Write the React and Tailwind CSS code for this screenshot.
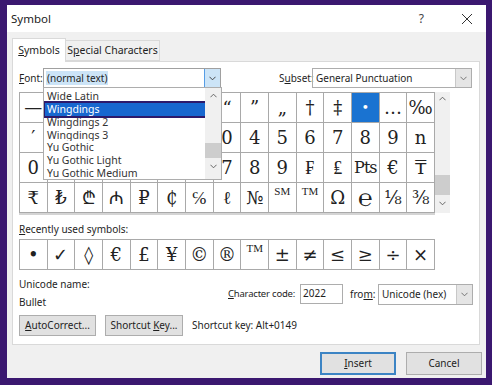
import React from 'react';

const gridRows = [
  ['—', '―', '‗', '‘', '’', '‚', '‛', '“', '”', '„', '†', '‡', '•', '…', '‰'],
  ['′', '″', '‹', '›', '‼', '‾', '⁄', '0', '4', '5', '6', '7', '8', '9', 'n'],
  ['0', '1', '2', '3', '4', '5', '6', '7', '8', '9', '₣', '₤', 'Pts', '€', '₸'],
  ['₹', '₺', '₾', '₼', '₽', '₵', '℅', 'ℓ', '№', '℠', '™', 'Ω', '℮', '⅛', '⅜'],
];

const recent = ['•', '✓', '◊', '€', '£', '¥', '©', '®', '™', '±', '≠', '≤', '≥', '÷', '×'];

const fonts = ['Wide Latin', 'Wingdings', 'Wingdings 2', 'Wingdings 3', 'Yu Gothic', 'Yu Gothic Light', 'Yu Gothic Medium'];

function Chevron({ dir = 'down', className = '' }) {
  return (
    <svg viewBox="0 0 8 5" className={className} fill="none" stroke="currentColor" strokeWidth="1">
      {dir === 'down' ? <path d="M0.5 0.5 L4 4 L7.5 0.5" /> : <path d="M0.5 4.5 L4 1 L7.5 4.5" />}
    </svg>
  );
}

function Cell({ ch, selected }) {
  const small = ch === '℠' || ch === '™';
  let size = 'items-center text-[18px]';
  if (small) size = "items-start pt-[2px] text-[11px] leading-[12px] font-['Liberation_Serif',serif]";
  else if (ch === '℮') size = 'items-center text-[24px]';
  else if (ch === 'Pts') size = 'items-center text-[16px] tracking-[-1px]';
  else if (ch === '•' && selected) size = 'items-center text-[13px]';
  const label = ch === '℠' ? 'SM' : ch === '™' ? 'TM' : ch;
  return (
    <div
      className={`flex justify-center border-r border-b border-[#a9a9a9] overflow-hidden ${
        selected ? 'bg-[#1a73d1] text-white' : 'text-[#222]'
      } ${size}`}
    >
      {label}
    </div>
  );
}

function U({ children }) {
  return <span className="underline underline-offset-[1px]">{children}</span>;
}

export default function App() {
  return (
    <div className="w-[492px] h-[385px] bg-[#3b1870] pl-[7px] pr-[6px] pt-[5px] pb-[7px] font-['Noto_Sans',sans-serif] text-[10px] text-[#1e1e1e]">
      <div className="h-full bg-[#f0f0f0] flex flex-col">
        {/* title bar */}
        <div className="h-[27px] bg-white flex items-center pl-[4px] shrink-0">
          <span className="text-[11.5px] text-[#222]">Symbol</span>
          <span className="ml-auto text-[12px] text-[#444] mr-[38px]">?</span>
          <svg viewBox="0 0 10 10" className="w-[10px] h-[10px] mr-[14px] text-[#333]" stroke="currentColor" strokeWidth="1">
            <path d="M0 0 L10 10 M10 0 L0 10" />
          </svg>
        </div>

        {/* tabs */}
        <div className="flex items-end mt-[6px] ml-[5px] h-[23px] relative z-10 shrink-0">
          <div className="w-[54px] h-[24px] bg-white border border-b-0 border-[#d9d9d9] flex items-center justify-center text-[10.5px] -mb-px">
            <span><U>S</U>ymbols</span>
          </div>
          <div className="w-[94px] h-[21px] bg-[#f0f0f0] border border-l-0 border-[#d9d9d9] flex items-center justify-center text-[10.5px]">
            <span>S<U>p</U>ecial Characters</span>
          </div>
        </div>

        {/* panel */}
        <div className="ml-[5px] mr-[6px] h-[284px] bg-white border border-[#d9d9d9] relative px-[6px] shrink-0">
          {/* font / subset row */}
          <div className="flex items-center mt-[6px] h-[20px]">
            <span className="w-[24px]"><U>F</U>ont:</span>
            <div className="w-[178px] h-[20px] border border-[#a0a0a0] flex items-center pl-[2px]">
              <span className="bg-[#cce4f7] px-[1px] leading-[14px]">(normal text)</span>
              <div className="ml-auto w-[16px] h-full bg-[#cce4f7] border-l border-[#569de5] flex items-center justify-center text-[#333]">
                <Chevron className="w-[7px] h-[5px]" />
              </div>
            </div>
            <span className="ml-[58px] w-[33px]">S<U>u</U>bset:</span>
            <div className="w-[160px] h-[20px] border border-[#adadad] flex items-center pl-[3px]">
              <span>General Punctuation</span>
              <div className="ml-auto w-[16px] h-full bg-[#e5e5e5] border-l border-[#c8c8c8] flex items-center justify-center text-[#666]">
                <Chevron className="w-[7px] h-[5px]" />
              </div>
            </div>
          </div>

          {/* symbol grid */}
          <div className="flex mt-[4px] font-['DejaVu_Serif','Liberation_Serif',serif]">
            <div className="w-[416px] grid grid-cols-[repeat(15,minmax(0,1fr))] grid-rows-[repeat(4,30px)] border-l border-t border-[#a9a9a9] shadow-[0_2px_0_#d4d4d4]">
              {gridRows.map((row, r) =>
                row.map((ch, c) => <Cell key={`${r}-${c}`} ch={ch} selected={r === 0 && c === 12} />)
              )}
            </div>
            <div className="w-[15px] h-[121px] bg-[#f0f0f0] flex flex-col items-center text-[#555]">
              <Chevron dir="up" className="w-[7px] h-[5px] mt-[4px]" />
              <div className="w-full h-[20px] bg-[#cdcdcd] mt-[74px]" />
              <Chevron className="w-[7px] h-[5px] mt-[6px]" />
            </div>
          </div>

          {/* recently used */}
          <div className="mt-[10px] h-[13px] leading-[13px]"><U>R</U>ecently used symbols:</div>
          <div className="mt-[3px] w-[416px] grid grid-cols-[repeat(15,minmax(0,1fr))] grid-rows-[30px] border-l border-t border-[#a9a9a9] font-['DejaVu_Serif','Liberation_Serif',serif]">
            {recent.map((ch, i) => (
              <Cell key={i} ch={ch} />
            ))}
          </div>

          {/* unicode name / char code */}
          <div className="flex mt-[8px] h-[30px]">
            <div className="w-[209px] flex flex-col">
              <span className="h-[13px] leading-[13px]">Unicode name:</span>
              <span className="h-[13px] leading-[13px] mt-[5px]">Bullet</span>
            </div>
            <div className="flex items-center h-[20px] mt-[6px]">
              <span className="w-[72px] whitespace-nowrap text-[9.5px] tracking-[-0.2px]"><U>C</U>haracter code:</span>
              <div className="w-[43px] h-[20px] border border-[#adadad] pl-[2px] leading-[16px]">2022</div>
              <span className="ml-[7px] w-[28px]">fro<U>m</U>:</span>
              <div className="w-[95px] h-[21px] border border-[#adadad] flex items-center pl-[3px]">
                <span>Unicode (hex)</span>
                <div className="ml-auto w-[16px] h-full bg-[#e5e5e5] border-l border-[#c8c8c8] flex items-center justify-center text-[#666]">
                  <Chevron className="w-[7px] h-[5px]" />
                </div>
              </div>
            </div>
          </div>

          {/* buttons */}
          <div className="flex items-center mt-[7px] h-[21px]">
            <div className="w-[77px] h-[21px] bg-[#e1e1e1] border border-[#adadad] flex items-center justify-center">
              <span><U>A</U>utoCorrect...</span>
            </div>
            <div className="ml-[9px] w-[78px] h-[21px] bg-[#e1e1e1] border border-[#adadad] flex items-center justify-center">
              <span>Shortcut <U>K</U>ey...</span>
            </div>
            <span className="ml-[9px]">Shortcut key: Alt+0149</span>
          </div>

          {/* font dropdown list */}
          <div className="absolute left-[30px] top-[25px] w-[179px] h-[93px] bg-white border border-[#adadad] flex">
            <div className="flex-1 overflow-hidden">
              <div className="flex flex-col pt-[2px] text-[10.5px] text-[#333]">
                {fonts.map((f) =>
                  f === 'Wingdings' ? (
                    <div
                      key={f}
                      className="h-[17px] -my-[2px] -ml-px mr-[-3px] border-2 border-[#2d1a6b] bg-[#1767cf] text-white flex items-center pl-[2px] relative z-10 leading-[13px]"
                    >
                      {f}
                    </div>
                  ) : (
                    <div key={f} className="h-[12.8px] leading-[12.8px] pl-[3px] shrink-0 overflow-hidden">
                      {f}
                    </div>
                  )
                )}
              </div>
            </div>
            <div className="w-[16px] h-full bg-[#f0f0f0] flex flex-col items-center text-[#555]">
              <Chevron dir="up" className="w-[7px] h-[5px] mt-[5px]" />
              <div className="w-full h-[15px] bg-[#cdcdcd] mt-[45px]" />
              <Chevron className="w-[7px] h-[5px] mt-[6px]" />
            </div>
          </div>
        </div>

        {/* footer */}
        <div className="flex justify-end items-center mt-[7px] mr-[4px] gap-[10px]">
          <div className="w-[76px] h-[23px] bg-[#e1e1e1] border-2 border-[#3c84c4] flex items-center justify-center">
            <span><U>I</U>nsert</span>
          </div>
          <div className="w-[76px] h-[23px] bg-[#e1e1e1] border border-[#adadad] flex items-center justify-center">
            <span>Cancel</span>
          </div>
        </div>
      </div>
    </div>
  );
}
